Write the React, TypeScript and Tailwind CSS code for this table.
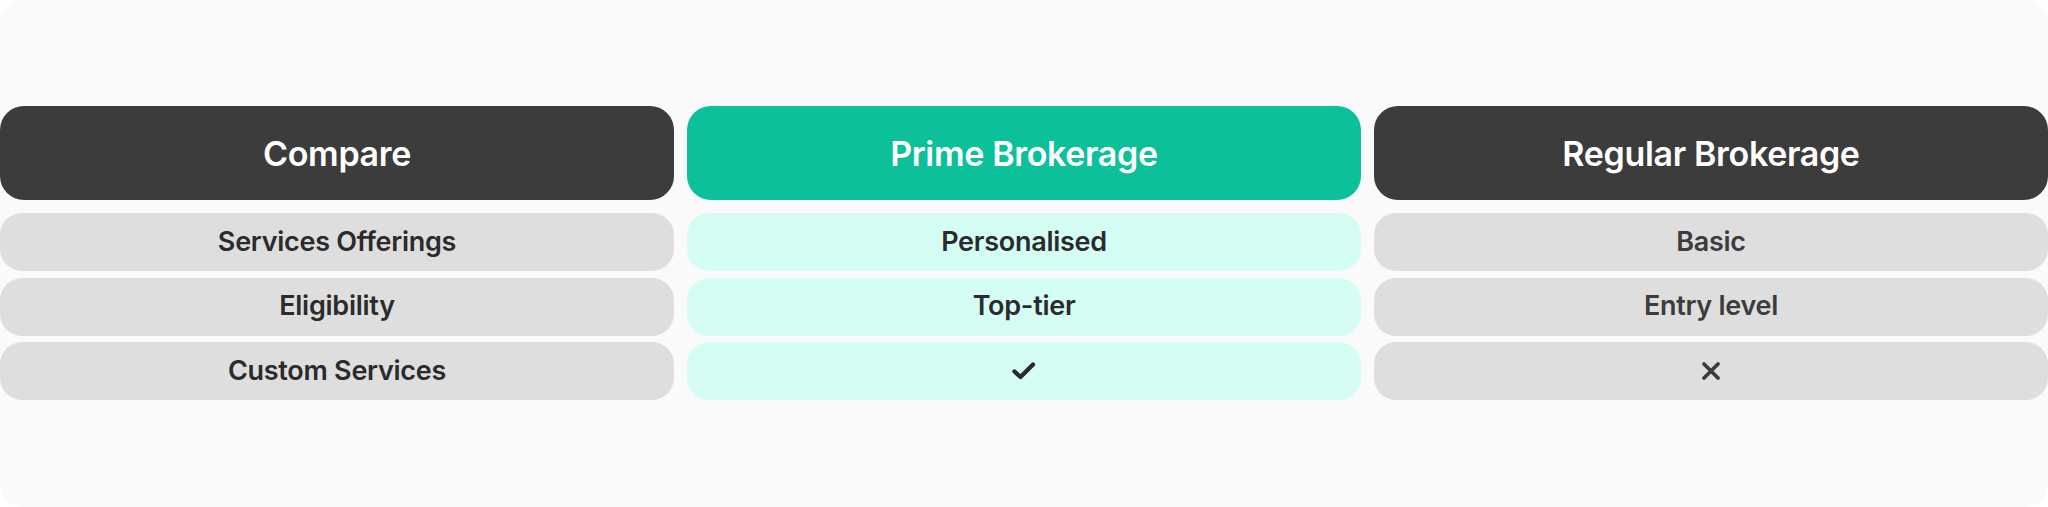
const rows = [
  { label: 'Services Offerings', prime: 'Personalised', regular: 'Basic' },
  { label: 'Eligibility', prime: 'Top-tier', regular: 'Entry level' },
  { label: 'Custom Services', prime: 'check', regular: 'cross' },
]

function Check() {
  return (
    <svg width="26" height="20" viewBox="0 0 26 20" fill="none">
      <path d="M3.5 10.5 L9.5 16 L22 3.5" stroke="#2b2b2b" strokeWidth="4.4" strokeLinecap="round" strokeLinejoin="round" />
    </svg>
  )
}

function Cross() {
  return (
    <svg width="20" height="20" viewBox="0 0 20 20" fill="none">
      <path d="M3 3 L17 17 M17 3 L3 17" stroke="#3c3c3c" strokeWidth="3.8" strokeLinecap="round" />
    </svg>
  )
}

function Cell({ value, className }: { value: string; className: string }) {
  return (
    <div className={`flex h-[58px] items-center justify-center rounded-[22px] text-[27px] font-semibold tracking-[-0.01em] ${className}`}>
      {value === 'check' ? <Check /> : value === 'cross' ? <Cross /> : value}
    </div>
  )
}

export default function App() {
  return (
    <div className="bg-white" style={{ fontFamily: 'Inter, sans-serif' }}>
      <div className="h-[507px] rounded-3xl bg-[#fafafa] pt-[106px]">
        <div className="grid grid-cols-3 gap-x-[13px]">
          <div className="flex h-[94px] items-center justify-center rounded-[24px] bg-[#3c3c3c] text-[34px] font-semibold tracking-[-0.01em] text-white">
            Compare
          </div>
          <div className="flex h-[94px] items-center justify-center rounded-[24px] bg-[#0cc09a] text-[34px] font-semibold tracking-[-0.01em] text-white">
            Prime Brokerage
          </div>
          <div className="flex h-[94px] items-center justify-center rounded-[24px] bg-[#3c3c3c] text-[34px] font-semibold tracking-[-0.01em] text-white">
            Regular Brokerage
          </div>
        </div>
        <div className="mt-[13px] flex flex-col gap-[6.5px]">
          {rows.map((r) => (
            <div key={r.label} className="grid grid-cols-3 gap-x-[13px]">
              <Cell value={r.label} className="bg-[#dedede] text-[#2b2b2b]" />
              <Cell value={r.prime} className="bg-[#d4fdf4] text-[#2b2b2b]" />
              <Cell value={r.regular} className="bg-[#dedede] text-[#3c3c3c]" />
            </div>
          ))}
        </div>
      </div>
    </div>
  )
}
